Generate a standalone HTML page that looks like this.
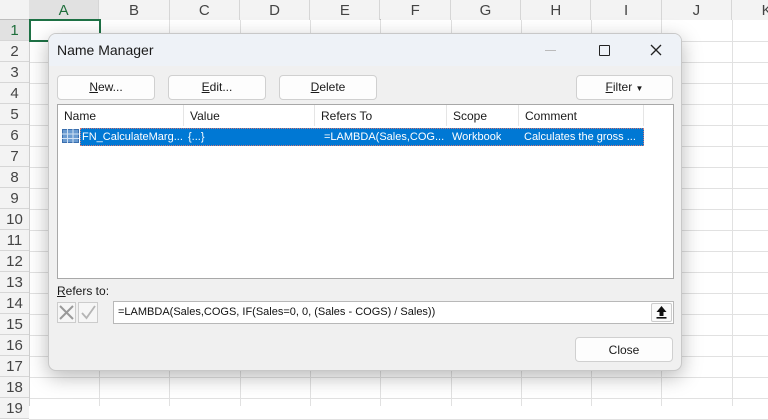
<!DOCTYPE html>
<html><head><meta charset="utf-8"><style>
*{margin:0;padding:0;box-sizing:border-box}
body{width:768px;height:406px;overflow:hidden;background:#fff;font-family:"Liberation Sans",sans-serif;position:relative}
.abs{position:absolute}
.ch{position:absolute;top:0;height:20px;font-size:15px;color:#444;text-align:center;line-height:22px;border-right:1px solid #d6d6d6;background:#f3f3f3}
.rh{position:absolute;left:0;width:29px;font-size:15px;color:#444;text-align:center;border-bottom:1px solid #d6d6d6;background:#f3f3f3}
.btn{position:absolute;background:#fdfdfd;border:1px solid #d0d0d0;border-radius:4px;font-size:12px;text-align:center;color:#1a1a1a}
.hd{position:absolute;top:0;height:21px;font-size:12px;line-height:22px;padding-left:6px;border-right:1px solid #e5e5e5;color:#1a1a1a}
.cell{position:absolute;top:0;font-size:11px;color:#fff;line-height:17px;white-space:nowrap;overflow:hidden}
</style></head><body>
<div class="abs" style="left:0;top:0;width:768px;height:20px;background:#f3f3f3;border-bottom:1px solid #bdbdbd"></div>
<script>
var cols="ABCDEFGHIJK",h='';
for(var i=0;i<11;i++){var x=29+i*70.3;h+='<div class="ch" style="left:'+x+'px;width:70.3px;'+(i==0?'background:#e1e1e1;color:#1e6e3b;border-bottom:2px solid #1e7145;height:21px':'')+'">'+cols[i]+'</div>';
h+='<div class="abs" style="left:'+(x+70)+'px;top:20px;width:1px;height:386px;background:#e1e1e1"></div>';}
for(var r=1;r<=19;r++){var y=20+(r-1)*21;h+='<div class="rh" style="top:'+y+'px;height:21px;line-height:22px;'+(r==1?'background:#e1e1e1;color:#1e6e3b':'')+'">'+r+'</div>';
h+='<div class="abs" style="left:29px;top:'+(y+21)+'px;width:739px;height:1px;background:#e1e1e1"></div>';}
document.write(h);
</script>
<div class="abs" style="left:29px;top:20px;width:1px;height:386px;background:#cfcfcf"></div>
<div class="abs" style="left:29px;top:19px;width:72px;height:23px;border:2px solid #1e7145"></div>

<div class="abs" style="left:48px;top:33px;width:634px;height:338px;background:#f0f0f0;border:1px solid #c8c8c8;border-radius:8px;box-shadow:0 6px 20px rgba(0,0,0,.28);overflow:hidden">
 <div class="abs" style="left:0;top:0;width:634px;height:32px;background:#eef2f7"></div>
 <div class="abs" style="left:8px;top:8px;font-size:14px;color:#1a1a1a">Name Manager</div>
 <div class="abs" style="left:496px;top:16px;width:11px;height:1px;background:#bbb"></div>
 <div class="abs" style="left:550px;top:11px;width:11px;height:11px;border:1.5px solid #222;border-radius:1px"></div>
 <svg class="abs" style="left:601px;top:10px" width="12" height="12"><path d="M1 1L11 11M11 1L1 11" stroke="#222" stroke-width="1.3"/></svg>

 <div class="btn" style="left:8px;top:41px;width:98px;height:25px;line-height:23px"><u>N</u>ew...</div>
 <div class="btn" style="left:119px;top:41px;width:98px;height:25px;line-height:23px"><u>E</u>dit...</div>
 <div class="btn" style="left:230px;top:41px;width:98px;height:25px;line-height:23px"><u>D</u>elete</div>
 <div class="btn" style="left:527px;top:41px;width:97px;height:25px;line-height:23px"><u>F</u>ilter <span style="font-size:8px">&#9660;</span></div>

 <div class="abs" style="left:8px;top:70px;width:617px;height:175px;background:#fff;border:1px solid #a8a8a8">
  <div class="hd" style="left:0;width:126px">Name</div>
  <div class="hd" style="left:126px;width:131px">Value</div>
  <div class="hd" style="left:257px;width:132px">Refers To</div>
  <div class="hd" style="left:389px;width:72px">Scope</div>
  <div class="hd" style="left:461px;width:125px">Comment</div>
  <div class="abs" style="left:22px;top:23px;width:564px;height:18px;background:#0078d4;border:1px dotted #c77">
   <div class="cell" style="left:1px;width:102px">FN_CalculateMarg...</div>
   <div class="cell" style="left:107px">{...}</div>
   <div class="cell" style="left:243px;width:125px">=LAMBDA(Sales,COG...</div>
   <div class="cell" style="left:371px">Workbook</div>
   <div class="cell" style="left:443px;width:118px">Calculates the gross ...</div>
  </div>
  <svg class="abs" style="left:4px;top:24px" width="17" height="14"><rect x=".5" y=".5" width="16" height="13" fill="#6a9bd1" stroke="#3b6fae"/><path d="M0 5H17M0 9.5H17M5.5 0V14M11 0V14" stroke="#cfe0f4"/></svg>
 </div>

 <div class="abs" style="left:8px;top:250px;font-size:12px;color:#1a1a1a"><u>R</u>efers to:</div>
 <div class="abs" style="left:8px;top:268px;width:19px;height:21px;border:1px solid #ccc;background:#f6f6f6"></div>
 <svg class="abs" style="left:10px;top:271px" width="15" height="15"><path d="M1 1L14 14M14 1L1 14" stroke="#999" stroke-width="2"/></svg>
 <div class="abs" style="left:29px;top:268px;width:20px;height:21px;border:1px solid #ccc;background:#f6f6f6"></div>
 <svg class="abs" style="left:32px;top:271px" width="15" height="15"><path d="M1 8L5.5 13L14 1" stroke="#b5b5b5" stroke-width="1.8" fill="none"/></svg>
 <div class="abs" style="left:64px;top:267px;width:561px;height:23px;background:#fff;border:1px solid #b8b8b8;font-size:11px;line-height:21px;padding-left:4px;color:#111">=LAMBDA(Sales,COGS, IF(Sales=0, 0, (Sales - COGS) / Sales))</div>
 <div class="abs" style="left:602px;top:269px;width:21px;height:19px;background:#fafafa;border:1px solid #ccc;border-radius:2px"></div>
 <svg class="abs" style="left:607px;top:272px" width="11" height="13"><path d="M5.5 0L10.5 6H7.5V10H3.5V6H0.5Z" fill="#111"/><rect x="0.5" y="11" width="10" height="1.6" fill="#111"/></svg>

 <div class="btn" style="left:526px;top:303px;width:98px;height:25px;line-height:24px">Close</div>
</div>
</body></html>
